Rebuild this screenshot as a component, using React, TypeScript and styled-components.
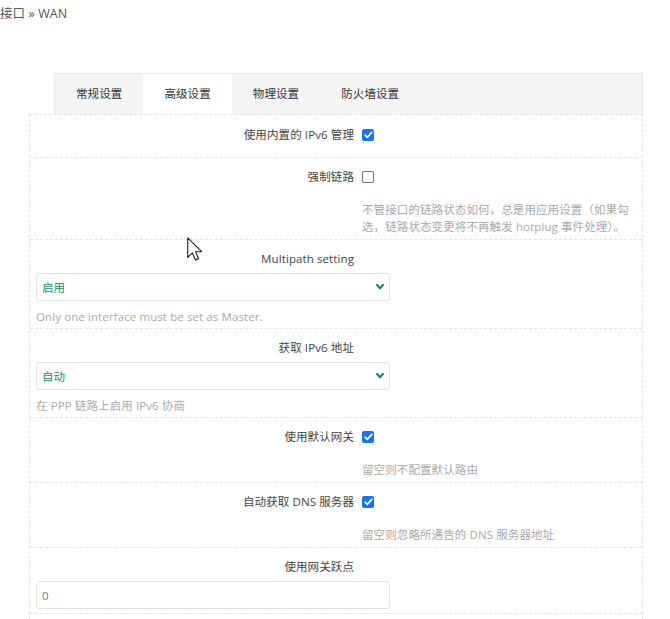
import React from "react";
import styled, { createGlobalStyle } from "styled-components";

const GlobalStyle = createGlobalStyle`
  html, body { margin: 0; padding: 0; background: #fff; }
  body {
    font-family: "Open Sans", "Noto Sans CJK SC", sans-serif;
    font-size: 11.5px;
    letter-spacing: 0.1px;
    color: #444;
  }
`;

const Page = styled.div`
  position: relative;
  width: 670px;
  height: 619px;
  overflow: hidden;
`;

const Breadcrumb = styled.div`
  height: 28px;
  line-height: 28px;
  font-size: 12.5px;
  color: #555;
`;

const Tabs = styled.ul`
  list-style: none;
  margin: 45px 27px 0 54px;
  padding: 0;
  display: flex;
  background: #f5f5f5;
  border: 1px solid #e4e8e9;
  border-bottom: none;
`;

const Tab = styled.li<{ $active?: boolean }>`
  padding: 0 21px;
  height: 40px;
  line-height: 40px;
  color: #333;
  background: ${(p) => (p.$active ? "#fff" : "transparent")};
`;

const Content = styled.div`
  margin: 0 27px 0 29px;
  padding: 1px 0 20px;
  border: 1px dashed #e2e5e5;
  border-bottom: none;
`;

const Row = styled.div<{ $pb: number }>`
  padding: 10px 6px ${(p) => p.$pb}px;
  border-bottom: 1px dashed #e2e5e5;
`;

const LabelLine = styled.div`
  display: flex;
  align-items: center;
  gap: 8px;
  height: 18px;
`;

const Label = styled.div`
  width: 318px;
  text-align: right;
  line-height: 18px;
  color: #444;
  white-space: nowrap;
`;

const Check = styled.span<{ $checked?: boolean }>`
  box-sizing: border-box;
  width: 12px;
  height: 12px;
  border-radius: 2px;
  display: inline-flex;
  align-items: center;
  justify-content: center;
  background: ${(p) => (p.$checked ? "#1a73e8" : "#fff")};
  border: 1px solid ${(p) => (p.$checked ? "#1a73e8" : "#767676")};
`;

const Desc = styled.div<{ $indent?: boolean; $mt: number }>`
  margin-top: ${(p) => p.$mt}px;
  margin-left: ${(p) => (p.$indent ? "326px" : "0")};
  width: ${(p) => (p.$indent ? "272px" : "auto")};
  line-height: 17px;
  color: #aaa;
`;

const SelectBox = styled.div`
  box-sizing: border-box;
  margin-top: 5px;
  width: 354px;
  height: 28px;
  border: 1px solid #dde5e4;
  border-radius: 3px;
  padding: 0 5px 0 5px;
  display: flex;
  align-items: center;
  justify-content: space-between;
  color: #228a70;
`;

const InputBox = styled(SelectBox)`
  color: #777;
`;

const Cursor = styled.svg`
  position: absolute;
  left: 187px;
  top: 237px;
`;

function Chevron() {
  return (
    <svg width="8" height="6" viewBox="0 0 8 6">
      <polyline points="1,1 4,4.2 7,1" fill="none" stroke="#17806a" strokeWidth="2" strokeLinecap="round" strokeLinejoin="round" />
    </svg>
  );
}

function Checkbox({ checked }: { checked?: boolean }) {
  return (
    <Check $checked={checked}>
      {checked && (
        <svg width="9" height="8" viewBox="0 0 9 8">
          <polyline points="1.2,4.2 3.4,6.3 7.8,1.4" fill="none" stroke="#fff" strokeWidth="1.7" strokeLinecap="round" strokeLinejoin="round" />
        </svg>
      )}
    </Check>
  );
}

export default function App() {
  return (
    <Page>
      <GlobalStyle />
      <Breadcrumb>接口 » WAN</Breadcrumb>
      <Tabs>
        <Tab>常规设置</Tab>
        <Tab $active>高级设置</Tab>
        <Tab>物理设置</Tab>
        <Tab>防火墙设置</Tab>
      </Tabs>
      <Content>
        <Row $pb={13}>
          <LabelLine>
            <Label>使用内置的 IPv6 管理</Label>
            <Checkbox checked />
          </LabelLine>
        </Row>
        <Row $pb={4}>
          <LabelLine>
            <Label>强制链路</Label>
            <Checkbox />
          </LabelLine>
          <Desc $indent $mt={15}>
            不管接口的链路状态如何，总是用应用设置（如果勾选，链路状态变更将不再触发 hotplug 事件处理）。
          </Desc>
        </Row>
        <Row $pb={3}>
          <LabelLine>
            <Label>Multipath setting</Label>
          </LabelLine>
          <SelectBox>
            <span>启用</span>
            <Chevron />
          </SelectBox>
          <Desc $mt={7}>Only one interface must be set as Master.</Desc>
        </Row>
        <Row $pb={3}>
          <LabelLine>
            <Label>获取 IPv6 地址</Label>
          </LabelLine>
          <SelectBox>
            <span>自动</span>
            <Chevron />
          </SelectBox>
          <Desc $mt={7}>在 PPP 链路上启用 IPv6 协商</Desc>
        </Row>
        <Row $pb={4}>
          <LabelLine>
            <Label>使用默认网关</Label>
            <Checkbox checked />
          </LabelLine>
          <Desc $indent $mt={15}>留空则不配置默认路由</Desc>
        </Row>
        <Row $pb={4}>
          <LabelLine>
            <Label>自动获取 DNS 服务器</Label>
            <Checkbox checked />
          </LabelLine>
          <Desc $indent $mt={15}>留空则忽略所通告的 DNS 服务器地址</Desc>
        </Row>
        <Row $pb={4}>
          <LabelLine>
            <Label>使用网关跃点</Label>
          </LabelLine>
          <InputBox>
            <span>0</span>
          </InputBox>
        </Row>
      </Content>
      <Cursor width="16" height="25" viewBox="0 0 13 20">
        <path d="M0.6 0.6 L0.6 16.4 L4.4 12.8 L6.9 18.6 L9.4 17.5 L6.9 11.8 L11.9 11.8 Z" fill="#fff" stroke="#222" strokeWidth="0.9" strokeLinejoin="round" />
      </Cursor>
    </Page>
  );
}
